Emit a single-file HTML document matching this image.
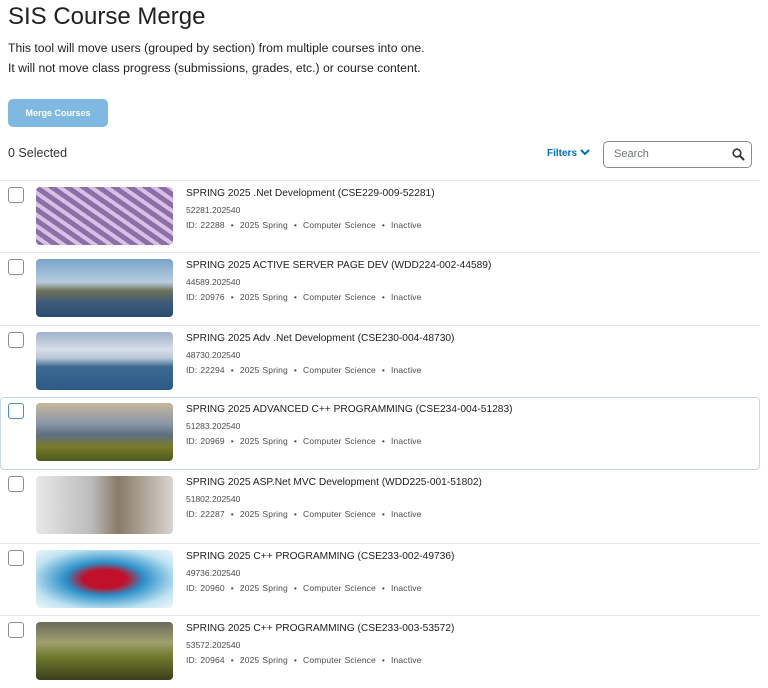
<!DOCTYPE html>
<html><head><style>
body{margin:0;background:#fff;font-family:"Liberation Sans",sans-serif;color:#202122;width:768px;height:685px;overflow:hidden;position:relative}
h1{position:absolute;left:8px;top:0;margin:0;font-weight:400;font-size:24px;line-height:34px;color:#202122}
.d{position:absolute;left:8px;font-size:12.2px;color:#202122}
.btn{position:absolute;left:8px;top:99px;width:100px;height:28px;background:#7fb8e0;border-radius:5px;color:#fff;font-size:9px;font-weight:bold;text-align:center;line-height:28px}
.sel{position:absolute;left:8px;top:146px;font-size:12.5px;color:#333}
.filt{position:absolute;left:547px;top:148px;font-size:10px;color:#006fbf;font-weight:bold}
.search{position:absolute;left:603px;top:141px;width:149px;height:27px;border:1px solid #868c8f;border-radius:5px;box-sizing:border-box}
.search span{position:absolute;left:10px;top:6px;font-size:11px;color:#6e7376}
.row{position:absolute;left:0;width:760px;height:72px;border-top:1px solid #e3e9f1}
.row.h{border-top:none;box-shadow:inset 0 0 0 1px #c8d6e8;border-radius:4px}
.cb{position:absolute;left:8px;top:6px;width:14px;height:14px;border:1px solid #8a8f93;border-radius:3px}
.img{position:absolute;left:36px;top:6px;width:137px;height:58px;border-radius:4px}
.t{position:absolute;left:186px;top:7px;font-size:10.2px;color:#202122;white-space:nowrap}
.s{position:absolute;left:186px;top:24px;font-size:8.5px;color:#494c4e}
.m{position:absolute;left:186px;top:39px;font-size:8.5px;color:#494c4e;white-space:nowrap;word-spacing:0.5px;letter-spacing:0.15px}
</style></head><body>
<h1>SIS Course Merge</h1>
<div class="d" style="top:41px">This tool will move users (grouped by section) from multiple courses into one.</div>
<div class="d" style="top:61px">It will not move class progress (submissions, grades, etc.) or course content.</div>
<div class="btn">Merge Courses</div>
<div class="sel">0 Selected</div>
<div class="filt">Filters <svg width="10" height="8" viewBox="0 0 10 8"><path d="M1 2l4 4 4-4" stroke="#006fbf" stroke-width="2" fill="none"/></svg></div>
<div class="search"><span>Search</span><svg style="position:absolute;right:6px;top:6px" width="13" height="13" viewBox="0 0 13 13"><circle cx="5" cy="5" r="3.8" stroke="#333" stroke-width="1.6" fill="none"/><path d="M8 8l4 4" stroke="#333" stroke-width="2"/></svg></div>

<div class="row" style="top:180px"><div class="cb"></div><div class="img" style="background:repeating-linear-gradient(35deg,#8c6fa8 0 5px,#d7c0e4 5px 9px)"></div><div class="t">SPRING 2025 .Net Development (CSE229-009-52281)</div><div class="s">52281.202540</div><div class="m">ID: 22288 &nbsp;•&nbsp; 2025 Spring &nbsp;•&nbsp; Computer Science &nbsp;•&nbsp; Inactive</div></div>
<div class="row" style="top:252px"><div class="cb"></div><div class="img" style="background:linear-gradient(#7aa3c8,#b7cde0 40%,#6f7257 55%,#3d5b7a 75%,#2d4d70)"></div><div class="t">SPRING 2025 ACTIVE SERVER PAGE DEV (WDD224-002-44589)</div><div class="s">44589.202540</div><div class="m">ID: 20976 &nbsp;•&nbsp; 2025 Spring &nbsp;•&nbsp; Computer Science &nbsp;•&nbsp; Inactive</div></div>
<div class="row" style="top:325px"><div class="cb"></div><div class="img" style="background:linear-gradient(#9fb2cc,#d8dee8 30%,#b9c6d6 45%,#3d6a92 60%,#2b5a86)"></div><div class="t">SPRING 2025 Adv .Net Development (CSE230-004-48730)</div><div class="s">48730.202540</div><div class="m">ID: 22294 &nbsp;•&nbsp; 2025 Spring &nbsp;•&nbsp; Computer Science &nbsp;•&nbsp; Inactive</div></div>
<div class="row h" style="top:397px;height:73px"><div class="cb" style="border-color:#4d8ec9"></div><div class="img" style="background:linear-gradient(#c9b79a,#8a97a8 35%,#5e6f80 55%,#7a7a2a 75%,#4a5a1e)"></div><div class="t">SPRING 2025 ADVANCED C++ PROGRAMMING (CSE234-004-51283)</div><div class="s">51283.202540</div><div class="m">ID: 20969 &nbsp;•&nbsp; 2025 Spring &nbsp;•&nbsp; Computer Science &nbsp;•&nbsp; Inactive</div></div>
<div class="row" style="top:470px;border-top:none"><div class="cb"></div><div class="img" style="background:linear-gradient(90deg,#e8e8e8,#bcbcbc 40%,#8a7a68 60%,#d8d4d0)"></div><div class="t">SPRING 2025 ASP.Net MVC Development (WDD225-001-51802)</div><div class="s">51802.202540</div><div class="m">ID: 22287 &nbsp;•&nbsp; 2025 Spring &nbsp;•&nbsp; Computer Science &nbsp;•&nbsp; Inactive</div></div>
<div class="row" style="top:543px"><div class="cb"></div><div class="img" style="background:radial-gradient(ellipse at 50% 50%,#c0102a 0 22%,#2b8fc8 40%,#bfe3f2 75%,#eef6fa)"></div><div class="t">SPRING 2025 C++ PROGRAMMING (CSE233-002-49736)</div><div class="s">49736.202540</div><div class="m">ID: 20960 &nbsp;•&nbsp; 2025 Spring &nbsp;•&nbsp; Computer Science &nbsp;•&nbsp; Inactive</div></div>
<div class="row" style="top:615px"><div class="cb"></div><div class="img" style="background:linear-gradient(#6a6a5a,#a0a070 35%,#6f7a2e 60%,#3a3e1a)"></div><div class="t">SPRING 2025 C++ PROGRAMMING (CSE233-003-53572)</div><div class="s">53572.202540</div><div class="m">ID: 20964 &nbsp;•&nbsp; 2025 Spring &nbsp;•&nbsp; Computer Science &nbsp;•&nbsp; Inactive</div></div>
</body></html>
